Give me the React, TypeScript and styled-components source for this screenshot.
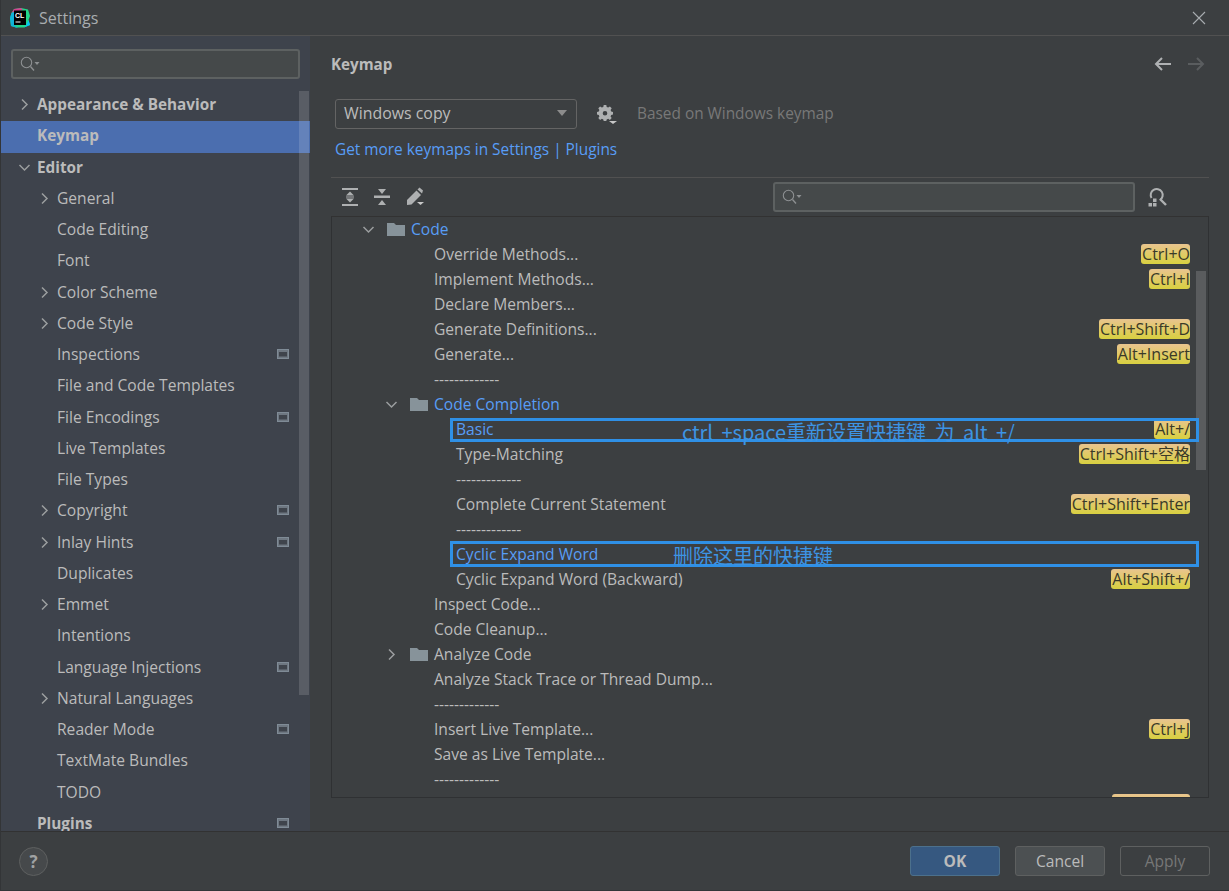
import { FC } from "react";
import styled, { createGlobalStyle } from "styled-components";

// ----------------------------------------------------------------------------

const UI_FONT = `"Open Sans", "Noto Sans CJK SC", sans-serif`;

const GlobalStyle = createGlobalStyle`
  html, body {
    margin: 0;
    padding: 0;
    width: 1229px;
    height: 891px;
    overflow: hidden;
    background: #3c3f41;
  }
  * { box-sizing: border-box; }
`;

// ----------------------------------------------------------------------------
// Data
// ----------------------------------------------------------------------------

interface NavItem {
  label: string;
  level: 0 | 1;
  arrow?: "open" | "closed";
  selected?: boolean;
  project?: boolean;
}

const NAV: NavItem[] = [
  { label: "Appearance & Behavior", level: 0, arrow: "closed" },
  { label: "Keymap", level: 0, selected: true },
  { label: "Editor", level: 0, arrow: "open" },
  { label: "General", level: 1, arrow: "closed" },
  { label: "Code Editing", level: 1 },
  { label: "Font", level: 1 },
  { label: "Color Scheme", level: 1, arrow: "closed" },
  { label: "Code Style", level: 1, arrow: "closed" },
  { label: "Inspections", level: 1, project: true },
  { label: "File and Code Templates", level: 1 },
  { label: "File Encodings", level: 1, project: true },
  { label: "Live Templates", level: 1 },
  { label: "File Types", level: 1 },
  { label: "Copyright", level: 1, arrow: "closed", project: true },
  { label: "Inlay Hints", level: 1, arrow: "closed", project: true },
  { label: "Duplicates", level: 1 },
  { label: "Emmet", level: 1, arrow: "closed" },
  { label: "Intentions", level: 1 },
  { label: "Language Injections", level: 1, project: true },
  { label: "Natural Languages", level: 1, arrow: "closed" },
  { label: "Reader Mode", level: 1, project: true },
  { label: "TextMate Bundles", level: 1 },
  { label: "TODO", level: 1 },
  { label: "Plugins", level: 0, project: true },
];

interface KeyRow {
  label: string;
  indent: number;
  keys?: string;
  folder?: "open" | "closed";
  blue?: boolean;
  note?: "basic" | "cyclic";
}

const SEP = "-------------";

const KEY_ROWS: KeyRow[] = [
  { label: "Code", indent: 79, folder: "open", blue: true },
  { label: "Override Methods...", indent: 102, keys: "Ctrl+O" },
  { label: "Implement Methods...", indent: 102, keys: "Ctrl+I" },
  { label: "Declare Members...", indent: 102 },
  { label: "Generate Definitions...", indent: 102, keys: "Ctrl+Shift+D" },
  { label: "Generate...", indent: 102, keys: "Alt+Insert" },
  { label: SEP, indent: 102 },
  { label: "Code Completion", indent: 102, folder: "open", blue: true },
  { label: "Basic", indent: 124, keys: "Alt+/", blue: true, note: "basic" },
  { label: "Type-Matching", indent: 124, keys: "Ctrl+Shift+空格" },
  { label: SEP, indent: 124 },
  { label: "Complete Current Statement", indent: 124, keys: "Ctrl+Shift+Enter" },
  { label: SEP, indent: 124 },
  { label: "Cyclic Expand Word", indent: 124, blue: true, note: "cyclic" },
  { label: "Cyclic Expand Word (Backward)", indent: 124, keys: "Alt+Shift+/" },
  { label: "Inspect Code...", indent: 102 },
  { label: "Code Cleanup...", indent: 102 },
  { label: "Analyze Code", indent: 102, folder: "closed" },
  { label: "Analyze Stack Trace or Thread Dump...", indent: 102 },
  { label: SEP, indent: 102 },
  { label: "Insert Live Template...", indent: 102, keys: "Ctrl+J" },
  { label: "Save as Live Template...", indent: 102 },
  { label: SEP, indent: 102 },
  { label: "", indent: 102, keys: "\u00A0Ctrl+Alt+T" },
];

// ----------------------------------------------------------------------------
// Layout
// ----------------------------------------------------------------------------

const Window = styled.div`
  width: 1229px;
  height: 891px;
  display: flex;
  flex-direction: column;
  background: #3c3f41;
  border-left: 1px solid #333537;
  border-bottom: 1px solid #333537;
  font-family: ${UI_FONT};
  font-size: 15.6px;
  color: #bbbbbb;
  overflow: hidden;
`;

const TitleBar = styled.header`
  height: 36px;
  flex: none;
  display: flex;
  align-items: center;
  padding: 0 23px 0 9px;
  gap: 9px;
  border-bottom: 1px solid #515151;
`;

const TitleText = styled.span`
  flex: 1;
  color: #a9adb0;
  font-size: 16px;
`;

const Body = styled.div`
  flex: 1;
  min-height: 0;
  display: flex;
`;

const Sidebar = styled.aside`
  position: relative;
  width: 309px;
  flex: none;
  background: #3e434c;
  padding-top: 13px;
  overflow: hidden;
`;

const SearchField = styled.div<{ $width: number }>`
  width: ${({ $width }) => $width}px;
  height: 30px;
  display: flex;
  align-items: center;
  padding-left: 7px;
  background: #45494a;
  border: 2px solid #5d6161;
  border-radius: 3px;
`;

const SidebarSearch = styled(SearchField)`
  margin: 0 0 11px 10px;
`;

const NavRow = styled.div<{ $selected?: boolean; $level: number }>`
  position: relative;
  height: 31.25px;
  display: flex;
  align-items: center;
  padding-left: ${({ $level }) => ($level === 0 ? 36 : 56)}px;
  padding-bottom: 3px;
  font-size: ${({ $level }) => ($level === 0 ? 15.3 : 15.6)}px;
  font-weight: ${({ $level }) => ($level === 0 ? 700 : 400)};
  background: ${({ $selected }) => ($selected ? "#4b6eaf" : "transparent")};
`;

const NavArrow = styled.span<{ $level: number }>`
  position: absolute;
  top: 8px;
  left: ${({ $level }) => ($level === 0 ? 17 : 37)}px;
  display: flex;
`;

const ProjectMark = styled.span`
  position: absolute;
  top: 9px;
  right: 21px;
  display: flex;
`;

const SidebarThumb = styled.div`
  position: absolute;
  top: 55px;
  right: 1px;
  width: 10px;
  height: 604px;
  background: rgba(255, 255, 255, 0.14);
`;

const Content = styled.main`
  flex: 1;
  min-width: 0;
  display: flex;
  flex-direction: column;
  padding: 0 20px 0 21px;
`;

const HeaderRow = styled.div`
  height: 56px;
  flex: none;
  display: flex;
  align-items: center;
  justify-content: space-between;
  padding: 0 4px 0 0;
`;

const PageTitle = styled.h1`
  margin: 0;
  font-size: 15.2px;
  font-weight: 700;
  color: #bbbbbb;
`;

const NavArrows = styled.div`
  display: flex;
  gap: 17px;
`;

const SchemeRow = styled.div`
  flex: none;
  margin-top: 7px;
  padding-left: 4px;
  display: flex;
  align-items: center;
  height: 30px;
`;

const SchemeSelect = styled.div`
  width: 242px;
  height: 30px;
  display: flex;
  align-items: center;
  justify-content: space-between;
  padding: 0 9px 2px 8px;
  border: 1px solid #646464;
  border-radius: 3px;
  background: #3c3f41;
  font-size: 15.9px;
`;

const Caret = styled.span`
  width: 0;
  height: 0;
  border-left: 5.5px solid transparent;
  border-right: 5.5px solid transparent;
  border-top: 6px solid #8c8c8c;
`;

const GearSlot = styled.span`
  display: flex;
  margin-left: 20px;
`;

const BasedOn = styled.span`
  margin-left: 20px;
  padding-bottom: 1px;
  color: #787878;
  font-size: 15.4px;
`;

const MoreLink = styled.a`
  flex: none;
  margin: 9px 0 0 4px;
  height: 24px;
  line-height: 24px;
  color: #589df6;
  font-size: 15.4px;
`;

const Toolbar = styled.div`
  flex: none;
  margin-top: 15px;
  height: 39px;
  display: flex;
  align-items: center;
  padding: 0 0 0 11px;
  border-top: 1px solid #515151;
`;

const ToolIcon = styled.span`
  display: flex;
  margin-right: 16px;
`;

const ToolbarSearch = styled(SearchField)`
  margin-left: auto;
  margin-right: 13px;
`;

const FindIcon = styled.span`
  display: flex;
  margin-right: 41px;
`;

const Tree = styled.div`
  position: relative;
  flex: none;
  height: 582px;
  border: 1px solid #2f3133;
  border-top-color: #323232;
  overflow: hidden;
`;

const TreeRow = styled.div<{ $indent: number; $blue?: boolean }>`
  position: relative;
  height: 25px;
  display: flex;
  align-items: center;
  padding-left: ${({ $indent }) => $indent}px;
  padding-right: 18px;
  padding-bottom: 2px;
  color: ${({ $blue }) => ($blue ? "#589df6" : "#bbbbbb")};
  white-space: nowrap;
`;

const RowLabel = styled.span`
  flex: 1;
`;

const FolderMark = styled.span<{ $left: number }>`
  position: absolute;
  top: 5px;
  left: ${({ $left }) => $left}px;
  display: flex;
  align-items: center;
  gap: 12px;
`;

const Shortcut = styled.span`
  height: 20px;
  line-height: 20px;
  padding-left: 1px;
  border-radius: 3px;
  color: #3a3a28;
  background: linear-gradient(#e9c48f, #d8d040);
  font-size: 16px;
`;

const TreeThumb = styled.div`
  position: absolute;
  top: 54px;
  right: 2px;
  width: 10px;
  height: 199px;
  background: #5a5c5e;
`;

const NoteBox = styled.div<{ $top: number; $height: number }>`
  position: absolute;
  z-index: 1;
  left: 118px;
  right: 9px;
  top: ${({ $top }) => $top}px;
  height: ${({ $height }) => $height}px;
  border: 3px solid #2f90e6;
`;

const NoteText = styled.span<{ $left: number }>`
  position: absolute;
  left: ${({ $left }) => $left}px;
  top: 50%;
  margin-top: 1px;
  transform: translateY(-50%);
  color: #3d94e4;
  font-family: "Noto Sans CJK SC", sans-serif;
  font-size: 20px;
  font-weight: 400;
  word-spacing: 4px;
  white-space: nowrap;
`;

const Footer = styled.footer`
  height: 59px;
  flex: none;
  display: flex;
  align-items: center;
  padding: 0 19px 0 18px;
  border-top: 1px solid #323232;
`;

const HelpButton = styled.span`
  width: 29px;
  height: 29px;
  display: flex;
  align-items: center;
  justify-content: center;
  border-radius: 50%;
  border: 1px solid #5e6060;
  background: #46494b;
  font-size: 17px;
  font-weight: 700;
  color: #a0a2a3;
  margin-right: auto;
`;

const DialogButton = styled.button<{ $kind: "primary" | "normal" | "disabled" }>`
  width: 90px;
  height: 30px;
  margin-left: 15px;
  padding: 0;
  border-radius: 3px;
  font-family: ${UI_FONT};
  font-size: 15.6px;
  font-weight: ${({ $kind }) => ($kind === "primary" ? 700 : 400)};
  color: ${({ $kind }) => ($kind === "disabled" ? "#777777" : "#bbbbbb")};
  background: ${({ $kind }) =>
    $kind === "primary" ? "#365880" : $kind === "normal" ? "#4c5052" : "#3c3f41"};
  border: 1px solid
    ${({ $kind }) => ($kind === "primary" ? "#4c708c" : "#5e6060")};
`;

// ----------------------------------------------------------------------------
// Drawings
// ----------------------------------------------------------------------------

const Logo: FC = () => (
  <svg width="20" height="20" viewBox="0 0 20 20">
    <path d="M4 1 L11 0 L18 1.5 L20 8 L18.5 12 L20 17 L14 19.5 L6 19.5 L1 18 L0 10 L1.5 5 Z" fill="#21d789" />
    <path d="M4 1 L11 0 L13 2 L4 4 L1.5 5 Z" fill="#d6418f" />
    <path d="M0 10 L1.5 5 L4 4 L4 17 L8 19.7 L6 19.5 L1 18 Z" fill="#10b4d8" />
    <path d="M14 19.5 L20 17 L18.5 12 L16 17.5 Z" fill="#07c3f2" />
    <rect x="4" y="2.5" width="12" height="14.5" fill="#000" />
    <text x="5" y="10" fill="#fff" fontSize="7" fontWeight="700" fontFamily="Liberation Sans, sans-serif">
      CL
    </text>
    <rect x="5.5" y="13.5" width="5" height="1" fill="#fff" />
  </svg>
);

const Close: FC = () => (
  <svg width="14" height="14" viewBox="0 0 14 14" stroke="#a9adb0" strokeWidth="1.1">
    <path d="M1 1 L13 13 M13 1 L1 13" />
  </svg>
);

const Chevron: FC<{ open?: boolean }> = ({ open }) => (
  <svg width="13" height="13" viewBox="0 0 13 13" fill="none" stroke="#9b9e9f" strokeWidth="1.5">
    <path d={open ? "M1.5 4 L6.5 9 L11.5 4" : "M4 1.5 L9 6.5 L4 11.5"} />
  </svg>
);

const ProjectIcon: FC = () => (
  <svg width="12" height="10" viewBox="0 0 12 10">
    <rect x="0.5" y="0.5" width="11" height="9" fill="#6e7781" stroke="#7f8b96" />
    <rect x="2" y="3" width="8" height="4.5" fill="#3f444c" />
  </svg>
);

const Folder: FC = () => (
  <svg width="18" height="14" viewBox="0 0 18 14">
    <path d="M0 1 H7 L9 3 H18 V14 H0 Z" fill="#87939a" />
  </svg>
);

const SearchGlyph: FC = () => (
  <svg width="20" height="16" viewBox="0 0 20 16" fill="none">
    <circle cx="6.5" cy="6.5" r="5.2" stroke="#8d9092" strokeWidth="1.1" />
    <path d="M10.5 10.5 L14 14.5" stroke="#8d9092" strokeWidth="1.4" />
    <path d="M14.5 6 H19.5 L17 9 Z" fill="#8d9092" />
  </svg>
);

const Arrow: FC<{ back?: boolean; color: string }> = ({ back, color }) => (
  <svg width="17" height="14" viewBox="0 0 17 14" fill="none" stroke={color} strokeWidth="2">
    {back ? <path d="M17 7 H2 M8 1 L2 7 L8 13" /> : <path d="M0 7 H15 M9 1 L15 7 L9 13" />}
  </svg>
);

const Gear: FC = () => (
  <svg width="20" height="20" viewBox="0 0 20 20">
    <path
      fillRule="evenodd"
      fill="#aeb0b1"
      d="M6.7 1 H9.3 L9.7 3 L11.2 3.6 L12.9 2.5 L14.7 4.3 L13.6 6 L14.2 7.5 L16 7.9 V10.5 L14.2 10.9 L13.6 12.4 L14.7 14.1 L12.9 15.9 L11.2 14.8 L9.7 15.4 L9.3 17 H6.7 L6.3 15.4 L4.8 14.8 L3.1 15.9 L1.3 14.1 L2.4 12.4 L1.8 10.9 L0 10.5 V7.9 L1.8 7.5 L2.4 6 L1.3 4.3 L3.1 2.5 L4.8 3.6 L6.3 3 Z M8 6.9 A2.3 2.3 0 1 0 8 11.5 A2.3 2.3 0 1 0 8 6.9 Z"
    />
    <path d="M12 17 H20 L16 20 Z" fill="#c8c8c8" />
  </svg>
);

const ExpandAll: FC = () => (
  <svg width="16" height="18" viewBox="0 0 16 18" fill="#aeb0b1">
    <rect x="0" y="0" width="16" height="2" />
    <rect x="0" y="16" width="16" height="2" />
    <rect x="4" y="8.5" width="8" height="1" />
    <path d="M4 7.5 L8 3.5 L12 7.5 Z M4 10.5 L8 14.5 L12 10.5 Z" />
  </svg>
);

const CollapseAll: FC = () => (
  <svg width="16" height="18" viewBox="0 0 16 18" fill="#aeb0b1">
    <rect x="0" y="7.5" width="16" height="2.5" />
    <path d="M4 1 H12 L8 6 Z M4 17 H12 L8 12 Z" />
  </svg>
);

const Pencil: FC = () => (
  <svg width="20" height="20" viewBox="0 0 20 20">
    <path d="M1 18 L1 13 L10.5 3.5 L15 8 L5.5 17.5 Z" fill="#aeb0b1" />
    <path d="M11.5 2.5 L13.5 0.5 L17 3.5 L16 6.5 Z" fill="#aeb0b1" />
    <path d="M11 15 H18 L14.5 18 Z" fill="#c8c8c8" />
  </svg>
);

const FindShortcut: FC = () => (
  <svg width="20" height="20" viewBox="0 0 20 20" fill="none">
    <path d="M3.5 11 A6 6 0 1 1 12 13" stroke="#aeb0b1" strokeWidth="2" />
    <path d="M12 12 L18 18" stroke="#aeb0b1" strokeWidth="2.4" />
    <rect x="0.5" y="16" width="3.5" height="3.5" fill="#aeb0b1" />
    <rect x="5" y="16" width="3.5" height="3.5" fill="#aeb0b1" />
    <rect x="5" y="11.5" width="3.5" height="3.5" fill="#aeb0b1" />
  </svg>
);

// ----------------------------------------------------------------------------

const App: FC = () => {
  return (
    <Window>
      <GlobalStyle />
      <TitleBar>
        <Logo />
        <TitleText>Settings</TitleText>
        <Close />
      </TitleBar>

      <Body>
        <Sidebar>
          <SidebarSearch $width={289}>
            <SearchGlyph />
          </SidebarSearch>
          {NAV.map((item) => (
            <NavRow key={item.label} $level={item.level} $selected={item.selected}>
              {item.arrow && (
                <NavArrow $level={item.level}>
                  <Chevron open={item.arrow === "open"} />
                </NavArrow>
              )}
              {item.label}
              {item.project && (
                <ProjectMark>
                  <ProjectIcon />
                </ProjectMark>
              )}
            </NavRow>
          ))}
          <SidebarThumb />
        </Sidebar>

        <Content>
          <HeaderRow>
            <PageTitle>Keymap</PageTitle>
            <NavArrows>
              <Arrow back color="#afb1b3" />
              <Arrow color="#5a5d5f" />
            </NavArrows>
          </HeaderRow>

          <SchemeRow>
            <SchemeSelect>
              Windows copy
              <Caret />
            </SchemeSelect>
            <GearSlot>
              <Gear />
            </GearSlot>
            <BasedOn>Based on Windows keymap</BasedOn>
          </SchemeRow>

          <MoreLink>Get more keymaps in Settings | Plugins</MoreLink>

          <Toolbar>
            <ToolIcon>
              <ExpandAll />
            </ToolIcon>
            <ToolIcon>
              <CollapseAll />
            </ToolIcon>
            <ToolIcon>
              <Pencil />
            </ToolIcon>
            <ToolbarSearch $width={362}>
              <SearchGlyph />
            </ToolbarSearch>
            <FindIcon>
              <FindShortcut />
            </FindIcon>
          </Toolbar>

          <Tree>
            {KEY_ROWS.map((row, i) => (
              <TreeRow key={i} $indent={row.indent} $blue={row.blue}>
                {row.folder && (
                  <FolderMark $left={row.indent - 49}>
                    <Chevron open={row.folder === "open"} />
                    <Folder />
                  </FolderMark>
                )}
                <RowLabel>{row.label}</RowLabel>
                {row.keys && <Shortcut>{row.keys}</Shortcut>}
                {row.note === "basic" && (
                  <NoteBox $top={1} $height={24}>
                    <NoteText $left={229}>ctrl +space重新设置快捷键 为 alt +/</NoteText>
                  </NoteBox>
                )}
                {row.note === "cyclic" && (
                  <NoteBox $top={-1} $height={26}>
                    <NoteText $left={220}>删除这里的快捷键</NoteText>
                  </NoteBox>
                )}
              </TreeRow>
            ))}
            <TreeThumb />
          </Tree>
        </Content>
      </Body>

      <Footer>
        <HelpButton>?</HelpButton>
        <DialogButton $kind="primary">OK</DialogButton>
        <DialogButton $kind="normal">Cancel</DialogButton>
        <DialogButton $kind="disabled">Apply</DialogButton>
      </Footer>
    </Window>
  );
};

export default App;
